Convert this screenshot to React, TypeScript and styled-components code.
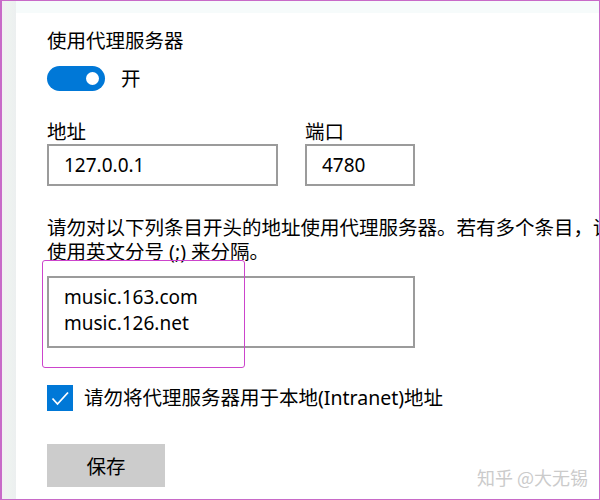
import styled, { createGlobalStyle } from 'styled-components';

const GlobalStyle = createGlobalStyle`
  html, body {
    margin: 0;
    padding: 0;
    background: #ffffff;
  }
  body {
    font-family: "Noto Sans", "Noto Sans CJK SC", sans-serif;
    color: #000000;
  }
`;

const App = () => {
  return (
    <>
      <GlobalStyle />
      <Frame>
        <SideStrip />
        <Content>
          <Title>使用代理服务器</Title>
          <ToggleRow>
            <Toggle>
              <Knob />
            </Toggle>
            <ToggleText>开</ToggleText>
          </ToggleRow>

          <FieldRow>
            <Field>
              <FieldLabel>地址</FieldLabel>
              <TextBox width={231}>127.0.0.1</TextBox>
            </Field>
            <Field>
              <FieldLabel>端口</FieldLabel>
              <TextBox width={110}>4780</TextBox>
            </Field>
          </FieldRow>

          {/* the window is cropped on the right, so the end of line 1 runs past the edge */}
          <Hint>
            请勿对以下列条目开头的地址使用代理服务器。若有多个条目，请使用英文分号 (;) 来分隔。
          </Hint>
          <AreaBox>
            <AreaLine>music.163.com</AreaLine>
            <AreaLine>music.126.net</AreaLine>
          </AreaBox>

          <CheckRow>
            <CheckBox>
              <svg width="26" height="26" viewBox="0 0 26 26">
                <polyline
                  points="5.5,13.5 10.5,19 21,7.5"
                  fill="none"
                  stroke="#ffffff"
                  strokeWidth="1.8"
                />
              </svg>
            </CheckBox>
            <CheckLabel>请勿将代理服务器用于本地(Intranet)地址</CheckLabel>
          </CheckRow>

          <SaveButton>保存</SaveButton>

          <Annotation />
          <Watermark>知乎 @大无锡</Watermark>
        </Content>
      </Frame>
    </>
  );
};

export default App;

const Frame = styled.div`
  width: 600px;
  height: 500px;
  box-sizing: border-box;
  border: 1px solid #c86ac8;
  border-left-width: 2px;
  display: flex;
  overflow: hidden;
  background: #ffffff;
`;

const SideStrip = styled.div`
  width: 14px;
  flex-shrink: 0;
  background: linear-gradient(90deg, #f3eef3 0%, #eef3f0 45%, #eceff0 100%);
`;

const Content = styled.div`
  position: relative;
  flex: 1;
  overflow: hidden;
  padding: 27px 0 0 31px;
  background: linear-gradient(#f6fbfb 0, #f6fbfb 12px, #ffffff 12px);
  font-size: 19.5px;
`;

const Title = styled.div`
  line-height: 25px;
  height: 25px;
`;

const ToggleRow = styled.div`
  display: flex;
  align-items: center;
  gap: 16px;
  margin-top: 13px;
`;

const Toggle = styled.div`
  width: 58px;
  height: 25px;
  box-sizing: border-box;
  border-radius: 13px;
  background: #0078d7;
  display: flex;
  align-items: center;
  justify-content: flex-end;
  padding-right: 6px;
`;

const Knob = styled.div`
  width: 13px;
  height: 13px;
  border-radius: 50%;
  background: #ffffff;
`;

const ToggleText = styled.span`
  line-height: 25px;
`;

const FieldRow = styled.div`
  display: flex;
  gap: 27px;
  margin-top: 29px;
`;

const Field = styled.div`
  display: flex;
  flex-direction: column;
`;

const FieldLabel = styled.div`
  line-height: 24px;
  height: 24px;
`;

const TextBox = styled.div<{ width: number }>`
  width: ${(p) => p.width}px;
  height: 42px;
  box-sizing: border-box;
  border: 2px solid #9b9b9b;
  padding-left: 15px;
  display: flex;
  align-items: center;
  font-size: 19px;
`;

const Hint = styled.div`
  width: 572px;
  margin-top: 30px;
  line-height: 24px;
`;

const AreaBox = styled.div`
  width: 368px;
  height: 72px;
  box-sizing: border-box;
  border: 2px solid #9b9b9b;
  margin-top: 12px;
  padding: 6px 0 0 15px;
  font-size: 19px;
`;

const AreaLine = styled.div`
  line-height: 26px;
`;

const CheckRow = styled.div`
  display: flex;
  align-items: center;
  gap: 11px;
  margin-top: 37px;
`;

const CheckBox = styled.div`
  width: 26px;
  height: 26px;
  background: #0078d7;
  display: flex;
`;

const CheckLabel = styled.span`
  line-height: 26px;
`;

const SaveButton = styled.button`
  display: block;
  width: 118px;
  height: 43px;
  margin-top: 33px;
  border: none;
  background: #cccccc;
  font-family: "Noto Sans", "Noto Sans CJK SC", sans-serif;
  font-size: 19.5px;
  color: #000000;
  padding: 0;
`;

const Annotation = styled.div`
  position: absolute;
  left: 26px;
  top: 259px;
  width: 203px;
  height: 108px;
  box-sizing: border-box;
  border: 1.5px solid #cc44cc;
  border-radius: 3px;
  pointer-events: none;
`;

const Watermark = styled.div`
  position: absolute;
  right: 11px;
  bottom: 12px;
  font-size: 18px;
  line-height: 20px;
  color: #cbcbcb;
  text-shadow: 0 0 1px #ffffff;
  font-family: "Noto Sans CJK SC", sans-serif;
`;
